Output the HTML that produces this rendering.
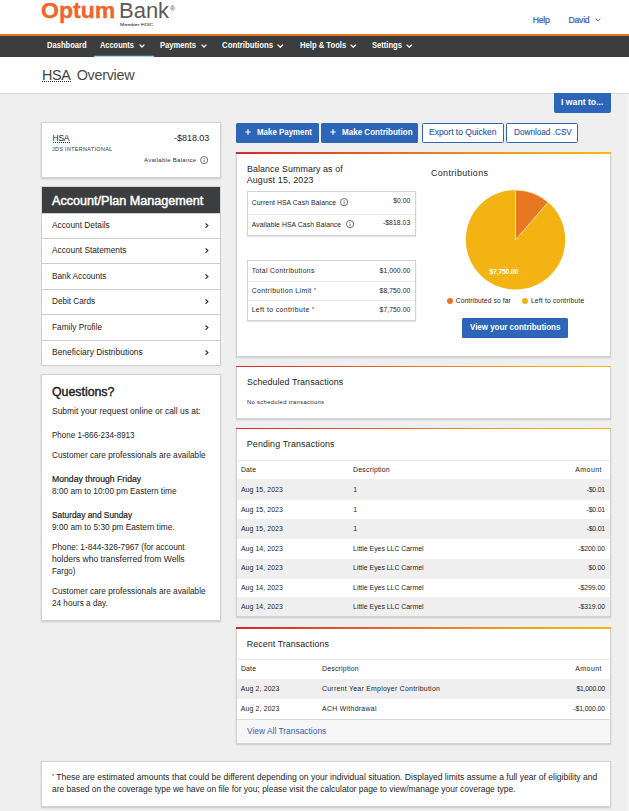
<!DOCTYPE html>
<html><head><meta charset="utf-8"><title>HSA Overview</title>
<style>
*{box-sizing:border-box;margin:0;padding:0}
html,body{width:629px;height:811px;overflow:hidden}
body{background:#efefef;font-family:"Liberation Sans",sans-serif;color:#222;position:relative;font-size:8px}
.a{position:absolute}
.t{position:absolute;white-space:nowrap;line-height:1}
.card{position:absolute;background:#fff;border:1px solid #d2d2d2;box-shadow:0 1px 1.5px rgba(0,0,0,.16)}
.grad{position:absolute;left:-1px;right:-1px;top:-1px;height:2px;background:linear-gradient(90deg,#d5282c,#e8702a 45%,#f0a01c 75%,#f2bb12)}
.bp{position:absolute;background:#2d66b9;border-radius:1.5px}
.bs{position:absolute;background:#fff;border:1px solid #2d66b9;border-radius:1.5px;box-shadow:0 0 0 .5px #fff inset}
.box{position:absolute;background:#fff;border:1px solid #d2d2d2;box-shadow:0 1px 1px rgba(0,0,0,.10)}
.hl{position:absolute;height:1px;background:#e9e9e9}
.g{position:absolute;background:#efefef}
.dot{position:absolute;border-radius:50%}
</style></head><body>

<div class="a" style="left:0;top:0;width:629px;height:34px;background:#fff"></div>
<div class="t" style="left:40.6px;top:0.4px;font-size:22.0px;font-weight:bold;color:#f2652a;letter-spacing:0.000px;-webkit-text-stroke:.35px #f2652a;transform:scaleX(1.047);transform-origin:0 0;">Optum</div>
<div class="t" style="left:118.8px;top:0.2px;font-size:22.0px;color:#5f5856;letter-spacing:0.000px;transform:scaleX(0.999);transform-origin:0 0;">Bank</div>
<div class="t" style="left:169.8px;top:5.7px;font-size:6.6px;color:#5b5452;letter-spacing:0.000px;transform:scaleX(1.070);transform-origin:0 0;">®</div>
<div class="t" style="left:120.2px;top:22.8px;font-size:4.4px;color:#4f4846;letter-spacing:0.000px;-webkit-text-stroke:.1px #4f4846;transform:scaleX(1.211);transform-origin:0 0;">Member FDIC</div>
<div class="t" style="left:532.7px;top:15.5px;font-size:8.6px;color:#3355b8;letter-spacing:-0.196px;-webkit-text-stroke:.2px #3355b8;">Help</div>
<div class="t" style="left:568.6px;top:15.5px;font-size:8.6px;color:#3355b8;letter-spacing:-0.241px;-webkit-text-stroke:.2px #3355b8;">David</div>
<svg class="a" style="left:595.1px;top:18.2px" width="5.8" height="4.1" viewBox="0 0 5.8 4.1"><polyline points="0.6,0.6 2.90,2.90 5.20,0.6" fill="none" stroke="#3a5dbd" stroke-width="1.0"/></svg>
<div class="a" style="left:0;top:34px;width:629px;height:2px;background:#e87722"></div>
<div class="a" style="left:0;top:36px;width:629px;height:20.6px;background:#3c3d3f"></div>
<div class="a" style="left:94px;top:55px;width:60px;height:1px;background:#4e6270"></div><div class="a" style="left:94px;top:56px;width:60px;height:1px;background:#9fd6ff"></div>
<div class="t" style="left:47.1px;top:41.3px;font-size:8.3px;font-weight:bold;color:#fff;letter-spacing:0.000px;transform:scaleX(0.916);transform-origin:0 0;">Dashboard</div>
<div class="t" style="left:100.2px;top:41.3px;font-size:8.3px;font-weight:bold;color:#fff;letter-spacing:0.000px;transform:scaleX(0.894);transform-origin:0 0;">Accounts</div>
<svg class="a" style="left:139.1px;top:43.9px" width="6.0" height="4.2" viewBox="0 0 6.0 4.2"><polyline points="0.6,0.6 3.00,3.00 5.40,0.6" fill="none" stroke="#fff" stroke-width="1.3"/></svg>
<div class="t" style="left:160.0px;top:41.3px;font-size:8.3px;font-weight:bold;color:#fff;letter-spacing:0.000px;transform:scaleX(0.918);transform-origin:0 0;">Payments</div>
<svg class="a" style="left:200.5px;top:43.9px" width="6.0" height="4.2" viewBox="0 0 6.0 4.2"><polyline points="0.6,0.6 3.00,3.00 5.40,0.6" fill="none" stroke="#fff" stroke-width="1.3"/></svg>
<div class="t" style="left:222.2px;top:41.3px;font-size:8.3px;font-weight:bold;color:#fff;letter-spacing:0.000px;transform:scaleX(0.940);transform-origin:0 0;">Contributions</div>
<svg class="a" style="left:277.2px;top:43.7px" width="6.6" height="4.5" viewBox="0 0 6.6 4.5"><polyline points="0.6,0.6 3.30,3.30 6.00,0.6" fill="none" stroke="#fff" stroke-width="1.3"/></svg>
<div class="t" style="left:299.9px;top:41.3px;font-size:8.3px;font-weight:bold;color:#fff;letter-spacing:0.000px;transform:scaleX(0.922);transform-origin:0 0;">Help &amp; Tools</div>
<svg class="a" style="left:350.3px;top:43.8px" width="6.5" height="4.5" viewBox="0 0 6.5 4.5"><polyline points="0.6,0.6 3.25,3.25 5.90,0.6" fill="none" stroke="#fff" stroke-width="1.3"/></svg>
<div class="t" style="left:372.0px;top:41.3px;font-size:8.3px;font-weight:bold;color:#fff;letter-spacing:0.000px;transform:scaleX(0.916);transform-origin:0 0;">Settings</div>
<svg class="a" style="left:406.2px;top:43.8px" width="6.5" height="4.5" viewBox="0 0 6.5 4.5"><polyline points="0.6,0.6 3.25,3.25 5.90,0.6" fill="none" stroke="#fff" stroke-width="1.3"/></svg>
<div class="a" style="left:0;top:56.6px;width:629px;height:37px;background:#fff;border-bottom:1px solid #d9d9d9"></div>
<div class="t" style="left:42.0px;top:68.2px;font-size:14.4px;color:#3d3d3d;letter-spacing:-0.398px;">HSA</div>
<div class="a" style="left:42px;top:81px;width:28.6px;height:0;border-top:1px dotted #333"></div>
<div class="t" style="left:76.7px;top:68.2px;font-size:14.4px;color:#4a4a4a;letter-spacing:-0.291px;">Overview</div>
<div class="bp" style="left:554px;top:93px;width:57px;height:20px;border-radius:0 0 2px 2px"></div>
<div class="t" style="left:561.2px;top:98.2px;font-size:8.3px;font-weight:bold;color:#fff;letter-spacing:0.000px;transform:scaleX(1.045);transform-origin:0 0;">I want to...</div>
<div class="card" style="left:41px;top:122px;width:180px;height:56px"></div>
<div class="t" style="left:52.5px;top:134.2px;font-size:8.6px;color:#1e1e1e;letter-spacing:-0.309px;">HSA</div>
<div class="a" style="left:52.5px;top:142px;width:17px;height:0;border-top:1px dotted #333"></div>
<div class="t" style="left:174.0px;top:133.6px;font-size:9.0px;color:#1e1e1e;letter-spacing:-0.031px;">-$818.03</div>
<div class="t" style="left:51.9px;top:146.7px;font-size:5.4px;color:#333;letter-spacing:0.362px;">JDS INTERNATIONAL</div>
<div class="t" style="left:144.0px;top:157.3px;font-size:6.0px;color:#333;letter-spacing:0.285px;">Available Balance</div>
<svg class="a" style="left:200.2px;top:155.6px" width="8.2" height="8.2" viewBox="0 0 10 10"><circle cx="5" cy="5" r="4.4" fill="none" stroke="#444" stroke-width="0.95"/><rect x="4.55" y="4.3" width="0.9" height="3" fill="#444"/><rect x="4.55" y="2.5" width="0.9" height="1" fill="#444"/></svg>
<div class="a" style="left:41px;top:186px;width:180px;height:28px;background:#d6d6d6"></div><div class="a" style="left:42px;top:187px;width:178px;height:26px;background:#3c3d3f"></div>
<div class="t" style="left:51.7px;top:194.6px;font-size:12.3px;color:#fff;letter-spacing:0.000px;-webkit-text-stroke:.45px #fff;transform:scaleX(1.025);transform-origin:0 0;">Account/Plan Management</div>
<div class="a" style="left:41px;top:212.5px;width:179.5px;height:26.4px;background:#fff;border:1px solid #cdcdcd"></div>
<div class="t" style="left:51.7px;top:220.9px;font-size:8.3px;color:#1e1e1e;letter-spacing:0.000px;transform:scaleX(1.002);transform-origin:0 0;">Account Details</div>
<svg class="a" style="left:205.0px;top:222.8px" width="3.7" height="5.7" viewBox="0 0 3.7 5.7"><polyline points="0.5,0.5 2.90,2.59 0.5,4.88" fill="none" stroke="#2a2a2a" stroke-width="1.1"/></svg>
<div class="a" style="left:41px;top:237.9px;width:179.5px;height:26.4px;background:#fff;border:1px solid #cdcdcd"></div>
<div class="t" style="left:51.7px;top:245.9px;font-size:8.3px;color:#1e1e1e;letter-spacing:0.000px;transform:scaleX(1.003);transform-origin:0 0;">Account Statements</div>
<svg class="a" style="left:205.0px;top:247.8px" width="3.7" height="5.7" viewBox="0 0 3.7 5.7"><polyline points="0.5,0.5 2.90,2.59 0.5,4.88" fill="none" stroke="#2a2a2a" stroke-width="1.1"/></svg>
<div class="a" style="left:41px;top:263.3px;width:179.5px;height:27.1px;background:#fff;border:1px solid #cdcdcd"></div>
<div class="t" style="left:51.7px;top:271.7px;font-size:8.3px;color:#1e1e1e;letter-spacing:0.000px;transform:scaleX(0.991);transform-origin:0 0;">Bank Accounts</div>
<svg class="a" style="left:205.0px;top:273.6px" width="3.7" height="5.7" viewBox="0 0 3.7 5.7"><polyline points="0.5,0.5 2.90,2.59 0.5,4.88" fill="none" stroke="#2a2a2a" stroke-width="1.1"/></svg>
<div class="a" style="left:41px;top:289.4px;width:179.5px;height:26.0px;background:#fff;border:1px solid #cdcdcd"></div>
<div class="t" style="left:51.7px;top:297.1px;font-size:8.3px;color:#1e1e1e;letter-spacing:0.000px;transform:scaleX(0.984);transform-origin:0 0;">Debit Cards</div>
<svg class="a" style="left:205.0px;top:299.0px" width="3.7" height="5.7" viewBox="0 0 3.7 5.7"><polyline points="0.5,0.5 2.90,2.59 0.5,4.88" fill="none" stroke="#2a2a2a" stroke-width="1.1"/></svg>
<div class="a" style="left:41px;top:314.4px;width:179.5px;height:26.7px;background:#fff;border:1px solid #cdcdcd"></div>
<div class="t" style="left:51.7px;top:322.8px;font-size:8.3px;color:#1e1e1e;letter-spacing:0.000px;transform:scaleX(0.997);transform-origin:0 0;">Family Profile</div>
<svg class="a" style="left:205.0px;top:324.7px" width="3.7" height="5.7" viewBox="0 0 3.7 5.7"><polyline points="0.5,0.5 2.90,2.59 0.5,4.88" fill="none" stroke="#2a2a2a" stroke-width="1.1"/></svg>
<div class="a" style="left:41px;top:340.1px;width:179.5px;height:26.1px;background:#fff;border:1px solid #cdcdcd"></div>
<div class="t" style="left:51.7px;top:347.9px;font-size:8.3px;color:#1e1e1e;letter-spacing:0.000px;transform:scaleX(1.020);transform-origin:0 0;">Beneficiary Distributions</div>
<svg class="a" style="left:205.0px;top:349.8px" width="3.7" height="5.7" viewBox="0 0 3.7 5.7"><polyline points="0.5,0.5 2.90,2.59 0.5,4.88" fill="none" stroke="#2a2a2a" stroke-width="1.1"/></svg>
<div class="card" style="left:41px;top:374px;width:179.5px;height:246.5px"></div>
<div class="t" style="left:51.7px;top:386.0px;font-size:12.0px;color:#222;letter-spacing:0.000px;-webkit-text-stroke:.42px #222;transform:scaleX(1.028);transform-origin:0 0;">Questions?</div>
<div class="t" style="left:51.7px;top:407.0px;font-size:8.3px;color:#1e1e1e;letter-spacing:0.000px;transform:scaleX(1.020);transform-origin:0 0;">Submit your request online or call us at:</div>
<div class="t" style="left:51.7px;top:431.1px;font-size:8.3px;color:#1e1e1e;letter-spacing:0.000px;transform:scaleX(0.967);transform-origin:0 0;">Phone 1-866-234-8913</div>
<div class="t" style="left:51.7px;top:450.8px;font-size:8.3px;color:#1e1e1e;letter-spacing:0.000px;transform:scaleX(0.991);transform-origin:0 0;">Customer care professionals are available</div>
<div class="t" style="left:51.7px;top:475.1px;font-size:8.3px;color:#1e1e1e;letter-spacing:0.000px;-webkit-text-stroke:.2px #1e1e1e;transform:scaleX(1.045);transform-origin:0 0;">Monday through Friday</div>
<div class="t" style="left:51.7px;top:487.2px;font-size:8.3px;color:#1e1e1e;letter-spacing:0.000px;transform:scaleX(0.996);transform-origin:0 0;">8:00 am to 10:00 pm Eastern time</div>
<div class="t" style="left:51.7px;top:511.2px;font-size:8.3px;color:#1e1e1e;letter-spacing:0.000px;-webkit-text-stroke:.2px #1e1e1e;transform:scaleX(1.004);transform-origin:0 0;">Saturday and Sunday</div>
<div class="t" style="left:51.7px;top:523.2px;font-size:8.3px;color:#1e1e1e;letter-spacing:0.000px;transform:scaleX(0.999);transform-origin:0 0;">9:00 am to 5:30 pm Eastern time.</div>
<div class="t" style="left:51.7px;top:542.9px;font-size:8.3px;color:#1e1e1e;letter-spacing:0.000px;transform:scaleX(0.991);transform-origin:0 0;">Phone: 1-844-326-7967 (for account</div>
<div class="t" style="left:51.7px;top:554.6px;font-size:8.3px;color:#1e1e1e;letter-spacing:0.000px;transform:scaleX(1.032);transform-origin:0 0;">holders who transferred from Wells</div>
<div class="t" style="left:51.7px;top:567.0px;font-size:8.3px;color:#1e1e1e;letter-spacing:0.000px;transform:scaleX(0.958);transform-origin:0 0;">Fargo)</div>
<div class="t" style="left:51.7px;top:587.0px;font-size:8.3px;color:#1e1e1e;letter-spacing:0.000px;transform:scaleX(0.991);transform-origin:0 0;">Customer care professionals are available</div>
<div class="t" style="left:51.7px;top:599.0px;font-size:8.3px;color:#1e1e1e;letter-spacing:0.000px;transform:scaleX(0.986);transform-origin:0 0;">24 hours a day.</div>
<div class="bp" style="left:236px;top:123px;width:82.5px;height:19.8px"></div>
<svg class="a" style="left:244.8px;top:129.3px" width="6" height="6" viewBox="0 0 6 6"><path d="M3 0.3V5.7M0.3 3H5.7" stroke="#fff" stroke-width="1.15" fill="none"/></svg>
<div class="t" style="left:256.8px;top:128.3px;font-size:8.3px;font-weight:bold;color:#fff;letter-spacing:0.000px;transform:scaleX(0.954);transform-origin:0 0;">Make Payment</div>
<div class="bp" style="left:321.2px;top:123px;width:96.6px;height:19.8px"></div>
<svg class="a" style="left:330.0px;top:129.3px" width="6" height="6" viewBox="0 0 6 6"><path d="M3 0.3V5.7M0.3 3H5.7" stroke="#fff" stroke-width="1.15" fill="none"/></svg>
<div class="t" style="left:341.7px;top:128.3px;font-size:8.3px;font-weight:bold;color:#fff;letter-spacing:0.000px;transform:scaleX(0.969);transform-origin:0 0;">Make Contribution</div>
<div class="bs" style="left:422px;top:123px;width:82px;height:19.8px"></div>
<div class="t" style="left:429.4px;top:128.2px;font-size:8.3px;color:#2a56a8;letter-spacing:0.000px;-webkit-text-stroke:.12px #2a56a8;transform:scaleX(1.022);transform-origin:0 0;">Export to Quicken</div>
<div class="bs" style="left:506px;top:123px;width:71.8px;height:19.8px"></div>
<div class="t" style="left:513.5px;top:128.2px;font-size:8.3px;color:#2a56a8;letter-spacing:0.000px;-webkit-text-stroke:.12px #2a56a8;transform:scaleX(0.987);transform-origin:0 0;">Download .CSV</div>
<div class="card" style="left:236px;top:152px;width:375px;height:205px"><div class="grad"></div></div>
<div class="t" style="left:246.9px;top:164.7px;font-size:8.9px;color:#1e1e1e;letter-spacing:0.077px;">Balance Summary as of</div>
<div class="t" style="left:246.7px;top:175.7px;font-size:8.9px;color:#1e1e1e;letter-spacing:0.148px;">August 15, 2023</div>
<div class="box" style="left:247px;top:191.4px;width:168.8px;height:44.4px"></div>
<div class="hl" style="left:248px;top:213.8px;width:166.8px"></div>
<div class="t" style="left:251.7px;top:199.6px;font-size:6.8px;color:#1e1e1e;letter-spacing:0.091px;">Current HSA Cash Balance</div>
<svg class="a" style="left:340.3px;top:198.3px" width="8.2" height="8.2" viewBox="0 0 10 10"><circle cx="5" cy="5" r="4.4" fill="none" stroke="#444" stroke-width="0.95"/><rect x="4.55" y="4.3" width="0.9" height="3" fill="#444"/><rect x="4.55" y="2.5" width="0.9" height="1" fill="#444"/></svg>
<div class="t" style="left:393.3px;top:197.6px;font-size:6.8px;color:#1e1e1e;letter-spacing:-0.003px;">$0.00</div>
<div class="t" style="left:251.7px;top:221.7px;font-size:6.8px;color:#1e1e1e;letter-spacing:0.092px;">Available HSA Cash Balance</div>
<svg class="a" style="left:345.6px;top:220.4px" width="8.2" height="8.2" viewBox="0 0 10 10"><circle cx="5" cy="5" r="4.4" fill="none" stroke="#444" stroke-width="0.95"/><rect x="4.55" y="4.3" width="0.9" height="3" fill="#444"/><rect x="4.55" y="2.5" width="0.9" height="1" fill="#444"/></svg>
<div class="t" style="left:382.9px;top:219.7px;font-size:6.8px;color:#1e1e1e;letter-spacing:0.074px;">-$818.03</div>
<div class="box" style="left:247px;top:260.2px;width:168.8px;height:60.4px"></div>
<div class="hl" style="left:248px;top:280.8px;width:166.8px"></div>
<div class="hl" style="left:248px;top:300.2px;width:166.8px"></div>
<div class="t" style="left:251.7px;top:267.6px;font-size:6.8px;color:#1e1e1e;letter-spacing:0.352px;">Total Contributions</div>
<div class="t" style="left:379.6px;top:267.6px;font-size:6.8px;color:#1e1e1e;letter-spacing:0.053px;">$1,000.00</div>
<div class="t" style="left:251.7px;top:287.6px;font-size:6.8px;color:#1e1e1e;letter-spacing:0.393px;">Contribution Limit <span style="font-size:5px;line-height:0;vertical-align:1.5px">*</span></div>
<div class="t" style="left:379.6px;top:287.6px;font-size:6.8px;color:#1e1e1e;letter-spacing:0.053px;">$8,750.00</div>
<div class="t" style="left:251.7px;top:306.7px;font-size:6.8px;color:#1e1e1e;letter-spacing:0.406px;">Left to contribute <span style="font-size:5px;line-height:0;vertical-align:1.5px">*</span></div>
<div class="t" style="left:379.6px;top:306.7px;font-size:6.8px;color:#1e1e1e;letter-spacing:0.053px;">$7,750.00</div>
<div class="t" style="left:431.0px;top:168.9px;font-size:8.9px;color:#1e1e1e;letter-spacing:0.384px;">Contributions</div>
<svg class="a" style="left:0;top:0" width="629" height="811"><circle cx="515.50" cy="239.80" r="49.75" fill="#f2b313"/><path d="M515.50 239.80 L515.50 190.05 A49.75 49.75 0 0 1 548.14 202.25 Z" fill="#e87722" stroke="#fff" stroke-width="0.7"/></svg>
<div class="t" style="left:489.5px;top:268.8px;font-size:6.8px;font-weight:bold;color:#fff;letter-spacing:-0.182px;">$7,750.00</div>
<div class="dot" style="left:446.7px;top:297.6px;width:6px;height:6px;background:#e87722"></div>
<div class="t" style="left:455.7px;top:297.8px;font-size:6.7px;color:#1e1e1e;letter-spacing:0.110px;">Contributed so far</div>
<div class="dot" style="left:521.6px;top:297.6px;width:6px;height:6px;background:#f2b313"></div>
<div class="t" style="left:530.9px;top:297.8px;font-size:6.7px;color:#1e1e1e;letter-spacing:0.204px;">Left to contribute</div>
<div class="bp" style="left:462px;top:318px;width:105.6px;height:19.7px"></div>
<div class="t" style="left:469.8px;top:323.2px;font-size:8.3px;font-weight:bold;color:#fff;letter-spacing:0.000px;transform:scaleX(0.958);transform-origin:0 0;">View your contributions</div>
<div class="card" style="left:236px;top:366px;width:375px;height:53px"><div class="grad" style="height:1px"></div></div>
<div class="t" style="left:246.9px;top:378.2px;font-size:8.9px;color:#1e1e1e;letter-spacing:0.077px;">Scheduled Transactions</div>
<div class="t" style="left:246.9px;top:399.5px;font-size:5.8px;color:#1e1e1e;letter-spacing:0.366px;">No scheduled transactions</div>
<div class="card" style="left:236px;top:428px;width:375px;height:189px"><div class="grad" style="height:1px"></div></div>
<div class="t" style="left:246.8px;top:439.8px;font-size:8.9px;color:#1e1e1e;letter-spacing:0.120px;">Pending Transactions</div>
<div class="hl" style="left:237px;top:459.6px;width:372.6px"></div>
<div class="g" style="left:237px;top:479.2px;width:372.6px;height:21.0px"></div>
<div class="g" style="left:237px;top:519.4px;width:372.6px;height:20.0px"></div>
<div class="g" style="left:237px;top:558.5px;width:372.6px;height:20.0px"></div>
<div class="g" style="left:237px;top:597.3px;width:372.6px;height:18.7px"></div>
<div class="t" style="left:240.9px;top:467.0px;font-size:6.9px;color:#1e1e1e;letter-spacing:0.211px;">Date</div>
<div class="t" style="left:353.1px;top:467.0px;font-size:6.9px;color:#1e1e1e;letter-spacing:0.212px;">Description</div>
<div class="t" style="left:575.2px;top:467.0px;font-size:6.9px;color:#1e1e1e;letter-spacing:0.518px;">Amount</div>
<div class="t" style="left:240.9px;top:486.6px;font-size:6.9px;color:#1e1e1e;letter-spacing:0.087px;">Aug 15, 2023</div>
<div class="t" style="left:353.3px;top:486.6px;font-size:6.9px;color:#1e1e1e;letter-spacing:0.000px;">1</div>
<div class="t" style="left:586.6px;top:486.6px;font-size:6.9px;color:#1e1e1e;letter-spacing:-0.209px;">-$0.01</div>
<div class="t" style="left:240.9px;top:506.7px;font-size:6.9px;color:#1e1e1e;letter-spacing:0.087px;">Aug 15, 2023</div>
<div class="t" style="left:353.3px;top:506.7px;font-size:6.9px;color:#1e1e1e;letter-spacing:0.000px;">1</div>
<div class="t" style="left:586.6px;top:506.7px;font-size:6.9px;color:#1e1e1e;letter-spacing:-0.209px;">-$0.01</div>
<div class="t" style="left:240.9px;top:526.3px;font-size:6.9px;color:#1e1e1e;letter-spacing:0.087px;">Aug 15, 2023</div>
<div class="t" style="left:353.3px;top:526.3px;font-size:6.9px;color:#1e1e1e;letter-spacing:0.000px;">1</div>
<div class="t" style="left:586.6px;top:526.3px;font-size:6.9px;color:#1e1e1e;letter-spacing:-0.209px;">-$0.01</div>
<div class="t" style="left:240.9px;top:545.9px;font-size:6.9px;color:#1e1e1e;letter-spacing:0.087px;">Aug 14, 2023</div>
<div class="t" style="left:353.1px;top:545.9px;font-size:6.9px;color:#1e1e1e;letter-spacing:-0.003px;">Little Eyes LLC Carmel</div>
<div class="t" style="left:578.3px;top:545.9px;font-size:6.9px;color:#1e1e1e;letter-spacing:-0.067px;">-$200.00</div>
<div class="t" style="left:240.9px;top:565.4px;font-size:6.9px;color:#1e1e1e;letter-spacing:0.087px;">Aug 14, 2023</div>
<div class="t" style="left:353.1px;top:565.4px;font-size:6.9px;color:#1e1e1e;letter-spacing:-0.003px;">Little Eyes LLC Carmel</div>
<div class="t" style="left:588.5px;top:565.4px;font-size:6.9px;color:#1e1e1e;letter-spacing:-0.167px;">$0.00</div>
<div class="t" style="left:240.9px;top:584.8px;font-size:6.9px;color:#1e1e1e;letter-spacing:0.087px;">Aug 14, 2023</div>
<div class="t" style="left:353.1px;top:584.8px;font-size:6.9px;color:#1e1e1e;letter-spacing:-0.003px;">Little Eyes LLC Carmel</div>
<div class="t" style="left:578.3px;top:584.8px;font-size:6.9px;color:#1e1e1e;letter-spacing:-0.067px;">-$299.00</div>
<div class="t" style="left:240.9px;top:603.6px;font-size:6.9px;color:#1e1e1e;letter-spacing:0.087px;">Aug 14, 2023</div>
<div class="t" style="left:353.1px;top:603.6px;font-size:6.9px;color:#1e1e1e;letter-spacing:-0.003px;">Little Eyes LLC Carmel</div>
<div class="t" style="left:578.3px;top:603.6px;font-size:6.9px;color:#1e1e1e;letter-spacing:-0.067px;">-$319.00</div>
<div class="card" style="left:236px;top:627px;width:375px;height:117px"><div class="grad" style="height:2px"></div></div>
<div class="t" style="left:246.8px;top:640.3px;font-size:8.9px;color:#1e1e1e;letter-spacing:0.065px;">Recent Transactions</div>
<div class="hl" style="left:237px;top:658.6px;width:372.6px"></div>
<div class="g" style="left:237px;top:678.6px;width:372.6px;height:20.7px"></div>
<div class="a" style="left:237px;top:719px;width:372.6px;height:24px;background:#f6f6f6;border-top:1px solid #dcdcdc"></div>
<div class="t" style="left:240.9px;top:665.5px;font-size:6.9px;color:#1e1e1e;letter-spacing:0.211px;">Date</div>
<div class="t" style="left:322.0px;top:665.5px;font-size:6.9px;color:#1e1e1e;letter-spacing:0.222px;">Description</div>
<div class="t" style="left:575.2px;top:665.5px;font-size:6.9px;color:#1e1e1e;letter-spacing:0.518px;">Amount</div>
<div class="t" style="left:240.8px;top:686.1px;font-size:6.9px;color:#1e1e1e;letter-spacing:0.146px;">Aug 2, 2023</div>
<div class="t" style="left:322.0px;top:686.1px;font-size:6.9px;color:#1e1e1e;letter-spacing:0.275px;">Current Year Employer Contribution</div>
<div class="t" style="left:576.4px;top:686.1px;font-size:6.9px;color:#1e1e1e;letter-spacing:-0.242px;">$1,000.00</div>
<div class="t" style="left:240.8px;top:706.0px;font-size:6.9px;color:#1e1e1e;letter-spacing:0.146px;">Aug 2, 2023</div>
<div class="t" style="left:322.0px;top:706.0px;font-size:6.9px;color:#1e1e1e;letter-spacing:0.300px;">ACH Withdrawal</div>
<div class="t" style="left:573.3px;top:706.0px;font-size:6.9px;color:#1e1e1e;letter-spacing:-0.132px;">-$1,000.00</div>
<div class="t" style="left:246.5px;top:727.1px;font-size:8.3px;color:#3a5dbd;letter-spacing:0.000px;transform:scaleX(1.013);transform-origin:0 0;">View All Transactions</div>
<div class="card" style="left:41px;top:761px;width:570px;height:46px"></div>
<div class="t" style="left:51.6px;top:773.0px;font-size:8.3px;color:#1e1e1e;letter-spacing:0.000px;transform:scaleX(1.033);transform-origin:0 0;"><span style="font-size:5px;line-height:0;vertical-align:2px">*</span> These are estimated amounts that could be different depending on your individual situation. Displayed limits assume a full year of eligibility and</div>
<div class="t" style="left:51.6px;top:785.0px;font-size:8.3px;color:#1e1e1e;letter-spacing:0.000px;transform:scaleX(1.017);transform-origin:0 0;">are based on the coverage type we have on file for you; please visit the calculator page to view/manage your coverage type.</div>
<div class="a" style="left:628px;top:94px;width:1px;height:717px;background:#f8f8f8"></div>
</body></html>
